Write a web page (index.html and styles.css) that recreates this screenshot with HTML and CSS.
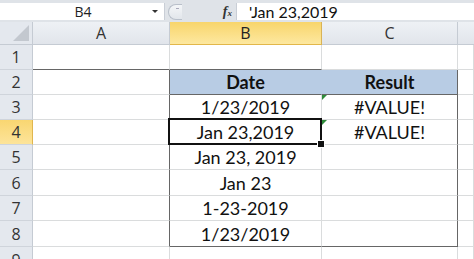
FILE: index.html
```html
<!DOCTYPE html>
<html>
<head>
<meta charset="utf-8">
<link rel="stylesheet" href="styles.css">
</head>
<body>
<div class="app">
  <div class="fbar">
    <div class="namebox"><span class="nb-text">B4</span><span class="nb-arrow"></span></div>
    <div class="fmid">
      <span class="pill"><span class="pill-dot"></span></span>
      <span class="fx">f<span class="fx-x">x</span></span>
    </div>
    <div class="finput">'Jan 23,2019</div>
  </div>
  <div class="sheet">
    <div class="corner"><span class="corner-tri"></span></div>
    <div class="ch">A</div>
    <div class="ch ch-sel">B</div>
    <div class="ch">C</div>
    <div class="ch ch-last"></div>

    <div class="rh">1</div>
    <div class="c tl-top"></div>
    <div class="c tl-top"></div>
    <div class="c"></div>
    <div class="c"></div>

    <div class="rh">2</div>
    <div class="c tl-left"></div>
    <div class="c hd">Date</div>
    <div class="c hd hd-r">Result</div>
    <div class="c"></div>

    <div class="rh">3</div>
    <div class="c tl-left"></div>
    <div class="c d">1/23/2019</div>
    <div class="c d tr flag">#VALUE!</div>
    <div class="c"></div>

    <div class="rh rh-sel">4</div>
    <div class="c tl-left"></div>
    <div class="c d active">Jan 23,2019</div>
    <div class="c d tr flag">#VALUE!</div>
    <div class="c"></div>

    <div class="rh">5</div>
    <div class="c tl-left"></div>
    <div class="c d">Jan 23, 2019</div>
    <div class="c d tr"></div>
    <div class="c"></div>

    <div class="rh">6</div>
    <div class="c tl-left"></div>
    <div class="c d">Jan 23</div>
    <div class="c d tr"></div>
    <div class="c"></div>

    <div class="rh">7</div>
    <div class="c tl-left"></div>
    <div class="c d">1-23-2019</div>
    <div class="c d tr"></div>
    <div class="c"></div>

    <div class="rh">8</div>
    <div class="c tl-left"></div>
    <div class="c d tb">1/23/2019</div>
    <div class="c d tr tb"></div>
    <div class="c"></div>

    <div class="rh rh-9">9</div>
    <div class="c"></div>
    <div class="c"></div>
    <div class="c"></div>
    <div class="c"></div>
  </div>
</div>
</body>
</html>
```
FILE: styles.css
```css
* { box-sizing: border-box; }
html, body { margin: 0; padding: 0; background: #fff; }
body { width: 474px; height: 259px; overflow: hidden; font-family: "Lato", "Open Sans", sans-serif; }

.app { display: flex; flex-direction: column; width: 474px; height: 259px; background: #dfe3e8; }

.fbar { display: flex; height: 17px; margin-top: 3px; background: #dfe3e8; }
.namebox { position: relative; width: 165px; background: #fff; border-right: 1px solid #c9ced6; display: flex; align-items: center; justify-content: center; }
.nb-text { font-family: "Open Sans", sans-serif; font-size: 14px; color: #222; margin-left: 2px; }
.nb-arrow { position: absolute; right: 6px; top: 7px; width: 0; height: 0; border-left: 3px solid transparent; border-right: 3px solid transparent; border-top: 3px solid #333; }
.fmid { width: 71px; display: flex; align-items: center; position: relative; }
.pill { margin-left: 3px; width: 14px; height: 16px; border: 1px solid #b9c0ca; border-right: none; border-radius: 9px 0 0 9px; background: linear-gradient(#f4f6f8, #e2e6eb); display: flex; align-items: center; justify-content: center; }
.pill-dot { width: 3px; height: 1px; background: #aab; margin-left: 3px; margin-top: -6px; }
.fx { margin-left: auto; margin-right: 4px; font-family: "Liberation Serif", serif; font-style: italic; font-weight: bold; font-size: 14px; color: #333; }
.fx-x { font-size: 9px; }
.finput { flex: 1; background: #fff; border-left: 1px solid #c9ced6; font-family: "Lato", sans-serif; font-size: 16px; color: #111; padding-left: 12px; line-height: 17px; }

.sheet { margin-top: 2px; display: grid; grid-template-columns: 33px 137px 152px 136px 16px; grid-template-rows: 23px 25px 25px 25px 25px 25px 26px 25px 26px 25px; background: #fff; flex: 1; overflow: hidden; }

.corner { background: #e4e8ee; border-right: 1px solid #c5cbd3; border-bottom: 1px solid #c5cbd3; position: relative; }
.corner-tri { position: absolute; right: 3px; bottom: 3px; width: 0; height: 0; border-left: 16px solid transparent; border-bottom: 16px solid #c3c8cf; }

.ch { background: linear-gradient(#eef1f5, #e1e5eb); border-right: 1px solid #c5cbd3; border-bottom: 1px solid #c5cbd3; font-family: "Open Sans", sans-serif; font-size: 16px; color: #333; display: flex; align-items: center; justify-content: center; }
.ch-sel { background: linear-gradient(#f8d56b, #fde8a0); border-bottom-color: #e2b74a; border-right-color: #d9b357; color: #222; }
.ch-last { border-right: none; }

.rh { background: #e4e8ee; border-right: 1px solid #c5cbd3; border-bottom: 1px solid #cfd4db; font-family: "Open Sans", sans-serif; font-size: 16px; color: #333; display: flex; align-items: center; justify-content: center; }
.rh-sel { background: linear-gradient(#f9d671, #fde49a); border-right-color: #e0b64e; }
.rh-9 { align-items: flex-start; padding-top: 2px; }

.c { border-right: 1px solid #dadcdd; border-bottom: 1px solid #dadcdd; font-size: 18px; color: #111; display: flex; align-items: center; justify-content: center; position: relative; }
.tl-top { border-bottom-color: #666; }
.tl-left { border-right-color: #666; }
.hd { background: #b8cce4; font-weight: bold; color: #111; border-bottom: 1px solid #666; border-right-color: #b8cce4; }
.hd-r { border-right-color: #666; }
.tr { border-right-color: #666; }
.tb { border-bottom-color: #666; }

.flag::before { content: ""; position: absolute; left: 0; top: 0; width: 0; height: 0; border-top: 5px solid #2e8b3a; border-right: 5px solid transparent; }

.active::after { content: ""; position: absolute; left: -2px; top: -2px; right: -1px; bottom: -1px; border: 2px solid #111; pointer-events: none; }
.active::before { content: ""; position: absolute; right: -4px; bottom: -4px; width: 6px; height: 6px; background: #111; border: 1px solid #fff; z-index: 2; }
```
